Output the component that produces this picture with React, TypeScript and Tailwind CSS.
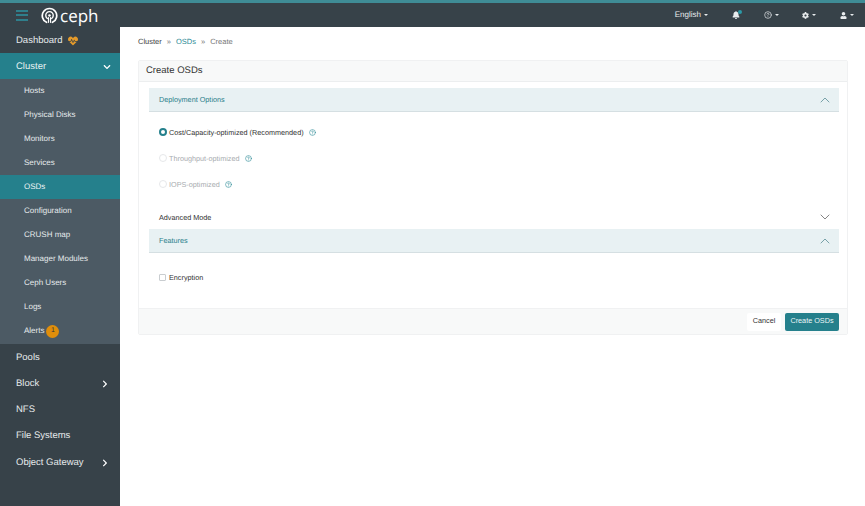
import { ChevronDown, ChevronUp, CircleHelp } from 'lucide-react';
import { FaBell, FaChevronDown, FaChevronRight, FaCog, FaHeartbeat, FaUser } from 'react-icons/fa';

const clusterItems = [
  'Hosts',
  'Physical Disks',
  'Monitors',
  'Services',
  'OSDs',
  'Configuration',
  'CRUSH map',
  'Manager Modules',
  'Ceph Users',
  'Logs',
  'Alerts',
];

function Caret() {
  return <span className="ml-[3px] h-0 w-0 border-x-[2px] border-t-[2px] border-x-transparent border-t-current" />;
}

function Help() {
  return <CircleHelp className="ml-[5px] h-[7px] w-[7px] text-[#2b8a96]" strokeWidth={2} />;
}

function CephLogo() {
  return (
    <svg viewBox="0 0 20 20" className="h-[17px] w-[17px]" fill="none" stroke="#ffffff">
      <path d="M6.5 18 A8.5 8.5 0 1 1 13.5 18" strokeWidth="2" strokeLinecap="round" />
      <path d="M7.5 13.5 A4.4 4.4 0 1 1 12.5 13.5" strokeWidth="1.6" strokeLinecap="round" />
      <path d="M8.8 18 V12.5 M11.2 18 V12.5" strokeWidth="1.4" strokeLinecap="round" />
      <circle cx="10" cy="10" r="1.5" fill="#ffffff" stroke="none" />
    </svg>
  );
}

function Navbar() {
  return (
    <header className="h-[27px] shrink-0 border-t-[3px] border-[#3f8c96] bg-[#374249] flex items-center text-[#e8ecee]">
      <div className="w-[120px] flex items-center pl-4">
        <div className="w-[12px] flex flex-col gap-[2.5px]">
          <span className="h-[2px] bg-[#2f7f8c]" />
          <span className="h-[2px] bg-[#2f7f8c]" />
          <span className="h-[2px] bg-[#2f7f8c]" />
        </div>
        <div className="ml-[13px] flex items-center">
          <CephLogo />
          <span className="ml-[2px] text-[17px] leading-none font-['Open_Sans',sans-serif] text-white">ceph</span>
        </div>
      </div>
      <div className="flex-1 flex items-center justify-end text-[8px] pr-[11px]">
        <div className="flex items-center">
          English
          <Caret />
        </div>
        <div className="relative ml-[24px]">
          <FaBell className="h-[8px] w-[8px] -scale-x-100" />
          <span className="absolute -right-[2px] -top-[1px] h-[4px] w-[4px] rounded-full bg-[#2b9aa8]" />
        </div>
        <div className="ml-[24px] flex items-center">
          <CircleHelp className="h-[8px] w-[8px]" strokeWidth={2} />
          <Caret />
        </div>
        <div className="ml-[23px] flex items-center">
          <FaCog className="h-[7px] w-[7px]" />
          <Caret />
        </div>
        <div className="ml-[24px] flex items-center">
          <FaUser className="h-[7px] w-[7px]" />
          <Caret />
        </div>
      </div>
    </header>
  );
}

function TopItem({ label, arrow }: { label: string; arrow?: boolean }) {
  return (
    <div className="h-[26.3px] flex items-center justify-between pl-4 pr-[11px] pt-px text-[9.5px] text-[#e6eaec]">
      <span>{label}</span>
      {arrow && <FaChevronRight className="h-[8px] w-[8px] text-white" />}
    </div>
  );
}

function Sidebar() {
  return (
    <aside className="w-[120px] shrink-0 bg-[#374249]">
      <div className="h-[26px] flex items-center pl-4 pt-[2px] text-[9.5px] text-[#e6eaec]">
        Dashboard
        <FaHeartbeat className="ml-[6px] h-[10px] w-[10px] text-[#e39a2b]" />
      </div>
      <div className="h-[26px] bg-[#25808c] flex items-center justify-between pl-4 pr-[9px] pt-[2px] text-[9.5px] text-[#e6f1f2]">
        Cluster
        <FaChevronDown className="h-[8px] w-[8px] text-white" />
      </div>
      <div className="h-[265px] bg-[#4c5a64]">
        {clusterItems.map((item) => (
          <div
            key={item}
            className={
              item === 'OSDs'
                ? 'h-[24px] flex items-center pl-6 text-[8px] text-[#eef3f4] bg-[#25808c]'
                : 'h-[24px] flex items-center pl-6 text-[8px] text-[#e6eaec]'
            }
          >
            {item}
            {item === 'Alerts' && (
              <span className="ml-[2px] h-[13px] w-[13px] rounded-full bg-[#e08e0b] flex items-center justify-center text-[7px] text-[#333]">
                1
              </span>
            )}
          </div>
        ))}
      </div>
      <TopItem label="Pools" />
      <TopItem label="Block" arrow />
      <TopItem label="NFS" />
      <TopItem label="File Systems" />
      <TopItem label="Object Gateway" arrow />
    </aside>
  );
}

function AccordionHeader({ label, open }: { label: string; open?: boolean }) {
  if (open) {
    return (
      <div className="flex items-center justify-between bg-[#e8f1f3] border-b border-[#d5dfe2] pl-[10px] pr-[6px] text-[7.25px] text-[#2b7f8b] h-full">
        <span className="pt-[2px]">{label}</span>
        <ChevronUp className="h-4 w-4 text-[#5a8e96]" strokeWidth={1.2} />
      </div>
    );
  }
  return (
    <div className="flex items-center justify-between bg-white pl-[10px] pr-[6px] text-[7.25px] text-[#333] h-full">
      <span className="pt-[2px]">{label}</span>
      <ChevronDown className="h-4 w-4 text-[#666]" strokeWidth={1.2} />
    </div>
  );
}

function RadioRow({ label, checked }: { label: string; checked?: boolean }) {
  return (
    <div className={checked ? 'h-[26px] flex items-center pl-[10px] text-[7.25px] text-[#333]' : 'h-[26px] flex items-center pl-[10px] text-[7.25px] text-[#a8acaf]'}>
      {checked ? (
        <span className="h-[8px] w-[8px] rounded-full border-2 border-[#25808c] bg-white mr-[2px]" />
      ) : (
        <span className="h-[8px] w-[8px] rounded-full border border-[#e6e8ea] bg-white mr-[2px]" />
      )}
      <span className="pt-[2px]">{label}</span>
      <Help />
    </div>
  );
}

function CreateCard() {
  return (
    <div className="h-[275px] border border-[#f0f1f2] rounded-[2px] flex flex-col">
      <div className="h-[21px] shrink-0 bg-[#f8f9f9] border-b border-[#eceeef] flex items-center pl-[7px] text-[9.5px] text-[#333]">
        Create OSDs
      </div>
      <div className="flex-1 pl-[10px] pr-[8px] pt-[6px]">
        <div className="h-[24px]">
          <AccordionHeader label="Deployment Options" open />
        </div>
        <div className="h-[93px] pt-[7px]">
          <RadioRow label="Cost/Capacity-optimized (Recommended)" checked />
          <RadioRow label="Throughput-optimized" />
          <RadioRow label="IOPS-optimized" />
        </div>
        <div className="h-[24px]">
          <AccordionHeader label="Advanced Mode" />
        </div>
        <div className="h-[24px]">
          <AccordionHeader label="Features" open />
        </div>
        <div className="h-[48px] flex items-center pl-[10px] text-[7.25px] text-[#333]">
          <span className="h-[7px] w-[7px] rounded-[1px] border border-[#c9cdd0] bg-white mr-[3px]" />
          <span className="pt-[2px]">Encryption</span>
        </div>
      </div>
      <div className="h-[26px] shrink-0 bg-[#f8f9f9] border-t border-[#f0f1f2] flex items-center justify-end gap-[4px] pr-[8px]">
        <button className="h-[18px] w-[34px] bg-white rounded-[2px] text-[7.25px] text-[#333]">Cancel</button>
        <button className="h-[18px] w-[54px] bg-[#25808c] rounded-[2px] text-[7.25px] text-[#eef6f7]">Create OSDs</button>
      </div>
    </div>
  );
}

export default function App() {
  return (
    <div className="h-[506px] w-[865px] overflow-hidden flex flex-col bg-white font-['Liberation_Sans',Arial,sans-serif] [text-rendering:geometricPrecision]">
      <Navbar />
      <div className="flex-1 flex min-h-0">
        <Sidebar />
        <main className="flex-1 pl-[18px] pr-[17px]">
          <nav className="h-[33px] flex items-center pb-[4px] text-[7.5px]">
            <span className="text-[#444]">Cluster</span>
            <span className="mx-[5px] text-[#777]">»</span>
            <span className="text-[#2b8a96]">OSDs</span>
            <span className="mx-[5px] text-[#777]">»</span>
            <span className="text-[#777]">Create</span>
          </nav>
          <CreateCard />
        </main>
      </div>
    </div>
  );
}
